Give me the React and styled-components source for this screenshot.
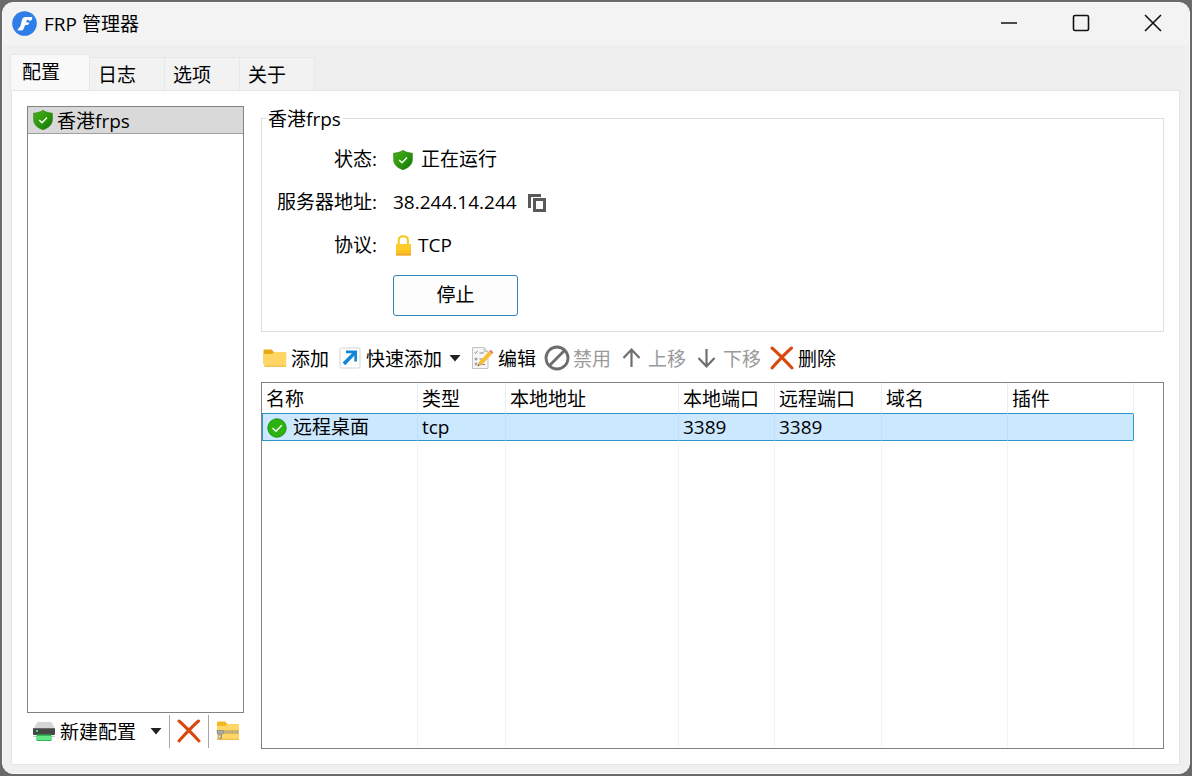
import React from "react";
import styled, { createGlobalStyle, css } from "styled-components";

const GlobalStyle = createGlobalStyle`
  *, *::before, *::after { box-sizing: border-box; }
  body {
    margin: 0;
    background: #6a6a6a;
    color: #000;
    font: 19px/28px "Open Sans", "Noto Sans CJK SC", sans-serif;
  }
  button {
    font: inherit;
    color: inherit;
    background: none;
    border: 0;
    padding: 0;
    margin: 0;
  }
`;

const Desktop = styled.div`
  display: flex;
  min-height: 100vh;
  padding: 2px;
`;

const Window = styled.main`
  flex: 1;
  min-width: 0;
  display: flex;
  flex-direction: column;
  background: #efefef;
  border: 1px solid #fafafa;
  border-radius: 11px;
  overflow: hidden;
`;

const TitleBar = styled.header`
  display: flex;
  align-items: center;
  height: 42px;
  padding: 0 0 2px 9px;
  background: #f3f3f3;
`;

const Title = styled.h1`
  flex: 1;
  margin: 0 0 0 7px;
  font-size: 19px;
  font-weight: 400;
  line-height: 28px;
  padding-top: 2px;
`;

const WindowButton = styled.button`
  display: grid;
  place-items: center;
  width: 72px;
  height: 40px;
`;

const Tabs = styled.div`
  display: flex;
  align-items: flex-end;
  height: 45px;
  padding: 0 7px;
`;

const Tab = styled.button`
  width: 75px;
  height: 33px;
  padding: 2px 0 0 8px;
  text-align: left;
  background: #f2f2f2;
  border: 1px solid #e7e7e7;
  border-width: 1px 1px 0 0;
  ${(p) =>
    p.$active &&
    css`
      width: 80px;
      height: 36px;
      padding: 0 0 1px 11px;
      background: #f9f9f9;
      border-left-width: 1px;
    `}
`;

const Page = styled.section`
  flex: 1;
  display: flex;
  gap: 17px;
  margin: 0 9px 8px 8px;
  padding: 15px;
  background: #fff;
  border: 1px solid #e5e5e5;
`;

const Sidebar = styled.aside`
  flex: none;
  width: 217px;
  display: flex;
  flex-direction: column;
`;

const ConfigList = styled.ul`
  flex: 1;
  margin: 0;
  padding: 0;
  list-style: none;
  border: 1px solid #828282;
`;

const ConfigItem = styled.li`
  display: flex;
  align-items: center;
  gap: 4px;
  height: 27px;
  padding-left: 5px;
  background: #d9d9d9;
  border-bottom: 1px solid #a0a0a0;
`;

const Label = styled.span`
  padding-top: 2px;
`;

const SideBarTools = styled.div`
  display: flex;
  align-items: center;
  height: 36px;
  padding-left: 5px;
`;

const ToolButton = styled.button`
  display: flex;
  align-items: center;
  gap: 4px;
  white-space: nowrap;
  &:disabled { color: #9a9a9a; }
`;

const CaretBox = styled.span`
  display: flex;
  margin-left: ${(p) => (p.$wide ? 10 : 3)}px;
`;

const Separator = styled.span`
  width: 1px;
  height: 33px;
  margin: 0 7px;
  background: #a6a6a6;
`;

const Content = styled.div`
  flex: 1;
  min-width: 0;
  display: flex;
  flex-direction: column;
`;

const Group = styled.fieldset`
  margin: 0;
  min-width: 0;
  padding: 16px 15px 15px;
  border: 1px solid #dedede;
`;

const GroupTitle = styled.legend`
  margin-left: -11px;
  padding: 2px 2px 0;
  line-height: 22px;
`;

const Details = styled.dl`
  display: grid;
  grid-template-columns: 100px 1fr;
  gap: 16px;
  margin: 0;
  line-height: 27px;
`;

const Term = styled.dt`
  text-align: right;
  white-space: nowrap;
`;

const Value = styled.dd`
  display: flex;
  align-items: center;
  gap: ${(p) => p.$gap || 0}px;
  margin: 0;
`;

const StopButton = styled.button`
  grid-column: 2;
  width: 125px;
  height: 41px;
  background: #fdfdfd;
  border: 1px solid #2f86b8;
  border-radius: 3px;
`;

const CopyButton = styled.button`
  display: flex;
`;

const Toolbar = styled.div`
  display: flex;
  align-items: center;
  gap: 9px;
  height: 50px;
  padding: 1px 0 0 2px;
`;

const TableFrame = styled.div`
  flex: 1;
  display: flex;
  border: 1px solid #828282;
`;

const Table = styled.table`
  flex: 1;
  table-layout: fixed;
  border-collapse: separate;
  border-spacing: 0;
`;

const HeadCell = styled.th`
  width: ${(p) => (p.$width ? `${p.$width}px` : "auto")};
  height: 30px;
  padding: 2px 0 0 4px;
  text-align: left;
  font-weight: 400;
  white-space: nowrap;
  border-right: ${(p) => (p.$width ? "1px solid #e9eef3" : "0")};
`;

const Cell = styled.td`
  height: 28px;
  padding: 1px 0 0 4px;
  line-height: 25px;
  white-space: nowrap;
  background: #cce8ff;
  border: 1px solid #2f93cc;
  border-width: 1px 0;
  border-right: 1px solid #bfe0fa;
  &:first-child { border-left: 1px solid #2f93cc; }
  &:nth-child(7) {
    border-right-color: #2f93cc;
    border-radius: 0 2px 2px 0;
  }
`;

const NameLine = styled.span`
  display: flex;
  align-items: center;
  gap: 6px;
`;

const EmptyCell = styled.td`
  padding: 0;
  border-right: ${(p) => (p.$line ? "1px solid #f0f4f8" : "0")};
`;

const Icon = styled.svg.attrs({ "aria-hidden": true })`
  display: block;
  flex: none;
`;

const LogoIcon = () => (
  <Icon width="25" height="25" viewBox="0 0 25 25">
    <circle cx="12.500" cy="12.500" r="12.300" fill="#2f7de9" />
    <path
      d="M9.800 9.500Q10.500 6 13.500 6H20.300Q20.300 10 17.300 10Q16.800 8.400 14.800 9L14.200 11.500H17.400Q17 14 14.800 14H13.200L11.600 18Q10.700 19.800 8.700 19.600L5.200 19.300L8.500 15Z"
      fill="#fff"
    />
  </Icon>
);

const ShieldIcon = () => (
  <Icon width="20" height="20" viewBox="0 0 20 20">
    <defs>
      <linearGradient id="shield" x1="0" y1="0" x2="1" y2="1">
        <stop offset="0" stopColor="#4caf1c" />
        <stop offset=".5" stopColor="#2f980f" />
        <stop offset="1" stopColor="#117009" />
      </linearGradient>
    </defs>
    <path
      d="M10 .3C12.300 2 16 3 19.400 3.200V9.500C19.400 14.300 15.800 17.800 10 19.800C4.200 17.800 .6 14.300 .6 9.500V3.200C4 3 7.700 2 10 .3Z"
      fill="url(#shield)"
      stroke="#257f0c"
      strokeWidth=".6"
    />
    <path d="M6.200 10L9 12.700L14 7.500" fill="none" stroke="#f4fff0" strokeWidth="1.500" />
  </Icon>
);

const CheckIcon = () => (
  <Icon width="20" height="20" viewBox="0 0 20 20">
    <circle cx="10" cy="10" r="9.200" fill="#2cb312" stroke="#239219" />
    <path d="M5.500 10L9 13.200L14.800 7.200" fill="none" stroke="#fff" strokeWidth="1.500" />
  </Icon>
);

const CopyIcon = () => (
  <Icon width="18" height="20" viewBox="0 0 18 20">
    <path d="M1.500 15V2.500H13" fill="none" stroke="#5a5a5a" strokeWidth="3" />
    <path d="M6.500 6.500H16.500V17.500H6.500Z" fill="#fff" stroke="#5a5a5a" strokeWidth="3" />
  </Icon>
);

const LockIcon = () => (
  <Icon width="20" height="21" viewBox="0 0 20 21">
    <path d="M5.700 11V5.200Q5.700 1.200 10.300 1.200Q14.900 1.200 14.900 5.200V11" fill="none" stroke="#f4c81a" strokeWidth="2" />
    <rect x="3" y="9" width="15" height="11.500" rx="1" fill="#ffcb28" />
    <path d="M3 16.500H18" stroke="#fbbe20" strokeWidth="2" />
    <path d="M3 19.500H18" stroke="#f0a830" strokeWidth="2" />
  </Icon>
);

const FolderIcon = () => (
  <Icon width="24" height="24" viewBox="0 0 24 24">
    <path d="M.5 18V4.500Q.5 3.500 1.500 3.500H8.500L11 6H22Q23 6 23 7V19Z" fill="#e9a915" />
    <path d="M1 8H9L11.500 6H22.500Q23.300 6 23.300 7V19.500Q23.300 20.500 22.300 20.500H2Q1 20.500 1 19.500Z" fill="#ffd666" />
    <path d="M1.500 20.300H23" stroke="#efb53a" />
  </Icon>
);

const ShortcutIcon = () => (
  <Icon width="24" height="24" viewBox="0 0 24 24">
    <rect x="2" y="2" width="20" height="20" rx="1.500" fill="#fff" stroke="#cfd3d8" />
    <path d="M8 4.500H19V15.500H16.300V9.800L7.200 19.200L4.600 16.600L14 7.300H8Z" fill="#1187d8" />
  </Icon>
);

const EditIcon = () => (
  <Icon width="24" height="24" viewBox="0 0 24 24">
    <path d="M2.500 1.500H14L18 5.500V22.500H2.500Z" fill="#f7f7f7" stroke="#c3c3c3" />
    <path d="M14 1.500V5.500H18" fill="#ddd" stroke="#c3c3c3" />
    <g fill="none" stroke="#858585">
      <path d="M4.500 6.500L5.500 7.500L7.500 5" />
      <circle cx="6" cy="13" r="1" />
      <circle cx="6" cy="18" r="1" />
      <path d="M9.500 7H14M9.500 13H12M9.500 18.500H15" />
    </g>
    <path d="M9 16L19.300 5L22.200 7.700L12 18.800L7.500 20.300Z" fill="#f9bd32" />
    <path d="M19.300 5L20.700 3.800L23.400 6.500L22.200 7.700Z" fill="#df6c65" />
    <path d="M9 16L12 18.800L7.500 20.300Z" fill="#dcac72" />
    <path d="M8.300 18.500L7.500 20.300L9.300 19.700Z" fill="#444" />
  </Icon>
);

const BanIcon = () => (
  <Icon width="24" height="24" viewBox="0 0 24 24" overflow="visible">
    <g fill="none" stroke="#6c6c6c" strokeWidth="2.800">
      <circle cx="12" cy="12" r="11" />
      <path d="M4.500 19.500L19.500 4.500" />
    </g>
  </Icon>
);

const ArrowIcon = ({ down }) => (
  <Icon width="24" height="24" viewBox="0 0 24 24">
    <path
      d={down ? "M11.500 3V20M3.500 12L11.500 20.500L19.500 12" : "M11.500 21V4M3.500 12L11.500 3.500L19.500 12"}
      fill="none"
      stroke="#6e6e6e"
      strokeWidth="2.200"
    />
  </Icon>
);

const CrossIcon = () => (
  <Icon width="24" height="24" viewBox="0 0 24 24">
    <path
      d="M2 2Q9.500 8.500 22 22M21.500 2Q14 8.500 2 22"
      fill="none"
      stroke="#d9480f"
      strokeWidth="3"
      strokeLinecap="round"
    />
  </Icon>
);

const DriveIcon = () => (
  <Icon width="24" height="24" viewBox="0 0 24 24">
    <path d="M5.500 3H19.500L23 9.500H1.500Z" fill="#d6d6d6" />
    <rect x="1" y="9" width="22" height="7" rx=".8" fill="#464646" />
    <path d="M1.500 9.500H22.500" stroke="#6b6b6b" />
    <rect x="4" y="11" width="2" height="2" fill="#43de70" />
    <path d="M1 17.500H23" stroke="#bcc8c0" />
    <path d="M4.500 15.500H19.500V22H4.500Z" fill="#2fb855" />
    <path d="M4.500 19H19.500" stroke="#63e68a" strokeWidth="4" />
  </Icon>
);

const ZipIcon = () => (
  <Icon width="24" height="24" viewBox="0 0 24 24">
    <path d="M1 12V3.500Q1 2.500 2 2.500H9L11.500 5H22Q23 5 23 6V12Z" fill="#f2b822" />
    <path d="M1 7H9L11.500 5H23V20.500H1Z" fill="#ffd766" />
    <path d="M1 20.300H23" stroke="#edb43a" />
    <path d="M1 13H23" stroke="#b09a5c" strokeWidth="3" />
    <path d="M1 13H23" stroke="#ece2c0" strokeDasharray="1.500 .8" />
    <path d="M1 11.500H7L8 13L6.500 15H5.500V19.500H3V15H1.500Z" fill="#a9a9a4" stroke="#858580" strokeWidth=".7" />
    <path d="M3.800 16.500V19" stroke="#eee" />
  </Icon>
);

const Caret = ({ wide }) => (
  <CaretBox $wide={wide}>
    <Icon width="12" height="8" viewBox="0 0 12 8">
      <path d="M.5 1H11.500L6 7.500Z" fill="#222" />
    </Icon>
  </CaretBox>
);

const WindowGlyph = ({ d }) => (
  <Icon width="18" height="18" viewBox="0 0 18 18">
    <path d={d} fill="none" stroke="#111" strokeWidth="1.600" strokeLinejoin="round" />
  </Icon>
);

const windowButtons = [
  { label: "最小化", d: "M1 9H17" },
  { label: "最大化", d: "M3 1.500H15Q16.500 1.500 16.500 3V15Q16.500 16.500 15 16.500H3Q1.500 16.500 1.500 15V3Q1.500 1.500 3 1.500Z" },
  { label: "关闭", d: "M1 1L17 17M17 1L1 17" },
];

const tabs = ["配置", "日志", "选项", "关于"];

const tools = [
  { label: "添加", icon: <FolderIcon /> },
  { label: "快速添加", icon: <ShortcutIcon />, menu: true },
  { label: "编辑", icon: <EditIcon /> },
  { label: "禁用", icon: <BanIcon />, disabled: true },
  { label: "上移", icon: <ArrowIcon />, disabled: true },
  { label: "下移", icon: <ArrowIcon down />, disabled: true },
  { label: "删除", icon: <CrossIcon /> },
];

const columns = [
  { label: "名称", width: 156 },
  { label: "类型", width: 88 },
  { label: "本地地址", width: 173 },
  { label: "本地端口", width: 96 },
  { label: "远程端口", width: 107 },
  { label: "域名", width: 126 },
  { label: "插件", width: 126 },
];

export default function App() {
  return (
    <Desktop>
      <GlobalStyle />
      <Window>
        <TitleBar>
          <LogoIcon />
          <Title>FRP 管理器</Title>
          {windowButtons.map((b) => (
            <WindowButton key={b.label} type="button" aria-label={b.label}>
              <WindowGlyph d={b.d} />
            </WindowButton>
          ))}
        </TitleBar>
        <Tabs role="tablist">
          {tabs.map((tab, i) => (
            <Tab key={tab} type="button" role="tab" aria-selected={i === 0} $active={i === 0}>
              {tab}
            </Tab>
          ))}
        </Tabs>
        <Page role="tabpanel">
          <Sidebar>
            <ConfigList>
              <ConfigItem>
                <ShieldIcon />
                <Label>香港frps</Label>
              </ConfigItem>
            </ConfigList>
            <SideBarTools>
              <ToolButton type="button">
                <DriveIcon />
                <Label>新建配置</Label>
                <Caret wide />
              </ToolButton>
              <Separator />
              <ToolButton type="button" aria-label="删除配置">
                <CrossIcon />
              </ToolButton>
              <Separator />
              <ToolButton type="button" aria-label="打包导出">
                <ZipIcon />
              </ToolButton>
            </SideBarTools>
          </Sidebar>
          <Content>
            <Group>
              <GroupTitle>香港frps</GroupTitle>
              <Details>
                <Term>状态:</Term>
                <Value $gap={8}>
                  <ShieldIcon />
                  正在运行
                </Value>
                <Term>服务器地址:</Term>
                <Value $gap={11}>
                  38.244.14.244
                  <CopyButton type="button" aria-label="复制">
                    <CopyIcon />
                  </CopyButton>
                </Value>
                <Term>协议:</Term>
                <Value $gap={5}>
                  <LockIcon />
                  TCP
                </Value>
                <StopButton type="button">停止</StopButton>
              </Details>
            </Group>
            <Toolbar>
              {tools.map((t) => (
                <ToolButton key={t.label} type="button" disabled={t.disabled}>
                  {t.icon}
                  <Label>{t.label}</Label>
                  {t.menu && <Caret />}
                </ToolButton>
              ))}
            </Toolbar>
            <TableFrame>
              <Table>
                <thead>
                  <tr>
                    {columns.map((c) => (
                      <HeadCell key={c.label} $width={c.width}>
                        {c.label}
                      </HeadCell>
                    ))}
                    <HeadCell as="td" />
                  </tr>
                </thead>
                <tbody>
                  <tr>
                    <Cell>
                      <NameLine>
                        <CheckIcon />
                        远程桌面
                      </NameLine>
                    </Cell>
                    <Cell>tcp</Cell>
                    <Cell />
                    <Cell>3389</Cell>
                    <Cell>3389</Cell>
                    <Cell />
                    <Cell />
                    <EmptyCell />
                  </tr>
                  <tr>
                    {columns.map((c) => (
                      <EmptyCell key={c.label} $line />
                    ))}
                    <EmptyCell />
                  </tr>
                </tbody>
              </Table>
            </TableFrame>
          </Content>
        </Page>
      </Window>
    </Desktop>
  );
}
